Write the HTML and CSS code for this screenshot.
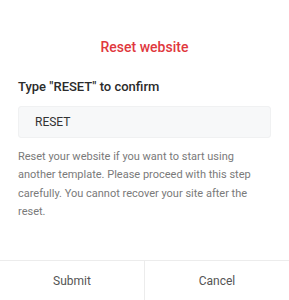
FILE: index.html
```html
<!DOCTYPE html>
<html lang="en">
<head>
    <meta charset="UTF-8">
    <meta name="viewport" content="width=device-width, initial-scale=1.0">
    <title>Reset website</title>
    <link rel="stylesheet" href="styles.css">
</head>
<body>
    <div class="reset-dialog">
        <h2 class="reset-title">Reset website</h2>
        <div class="form-group">
            <label for="confirm">Type "RESET" to confirm</label>
            <input type="text" id="confirm" value="RESET">
        </div>
        <p class="reset-note">Reset your website if you want to start using another template. Please proceed with this step carefully. You cannot recover your site after the reset.</p>
        <div class="dialog-actions">
            <button class="btn-action">Submit</button>
            <button class="btn-action">Cancel</button>
        </div>
    </div>
</body>
</html>
```

FILE: styles.css
```css
* { margin: 0; padding: 0; box-sizing: border-box; }
body { font-family: Roboto, "Noto Sans", sans-serif; background: #fff; color: #333; }
.reset-dialog { width: 289px; height: 300px; display: flex; flex-direction: column; }
.reset-title { text-align: center; color: #e0383e; font-size: 14px; font-weight: 500; margin-top: 38px; line-height: 18px; }
.form-group { padding: 0 18px; margin-top: 22px; }
.form-group label { display: block; font-size: 13px; font-weight: 500; color: #2b2b2b; line-height: 18px; margin-bottom: 10px; }
.form-group input { width: 100%; height: 32px; padding: 0 16px; border: 1px solid #f0f1f2; border-radius: 3px; background: #f7f8f9; font-family: inherit; font-size: 12px; color: #333; outline: none; }
.reset-note { padding: 0 18px; margin-top: 10px; font-size: 11px; line-height: 18.3px; color: #7a7a7a; }
.dialog-actions { margin-top: auto; display: flex; border-top: 1px solid #ececec; height: 40px; }
.btn-action { flex: 1; background: #fff; border: none; font-family: inherit; font-size: 12px; color: #555; cursor: pointer; }
.btn-action + .btn-action { border-left: 1px solid #ececec; }
```
